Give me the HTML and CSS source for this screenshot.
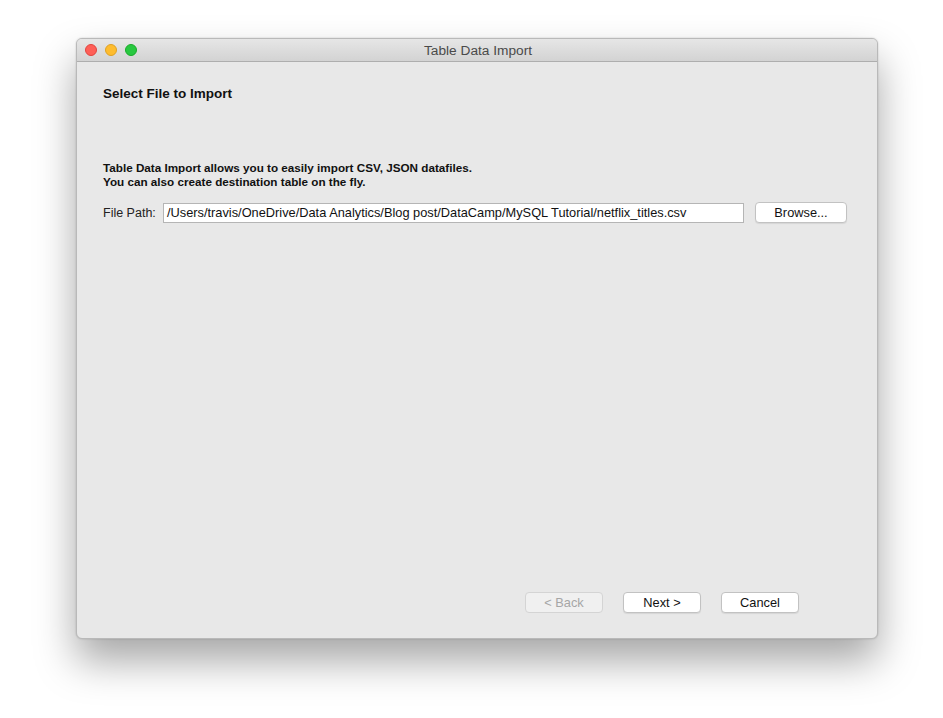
FILE: index.html
```html
<!DOCTYPE html>
<html>
<head>
<meta charset="utf-8">
<link rel="stylesheet" href="styles.css">
</head>
<body>
<div class="window">
  <div class="titlebar">
    <div class="lights">
      <span class="light red"></span>
      <span class="light yellow"></span>
      <span class="light green"></span>
    </div>
    <div class="title">Table Data Import</div>
  </div>
  <div class="content">
    <h1 class="heading">Select File to Import</h1>
    <p class="desc">Table Data Import allows you to easily import CSV, JSON datafiles.<br>You can also create destination table on the fly.</p>
    <div class="pathrow">
      <label class="label">File Path:</label>
      <div class="input">/Users/travis/OneDrive/Data Analytics/Blog post/DataCamp/MySQL Tutorial/netflix_titles.csv</div>
      <button class="btn browse">Browse...</button>
    </div>
    <div class="spacer"></div>
    <div class="footer">
      <button class="btn nav disabled">&lt; Back</button>
      <button class="btn nav">Next &gt;</button>
      <button class="btn nav">Cancel</button>
    </div>
  </div>
</div>
</body>
</html>
```
FILE: styles.css
```css
html, body {
  margin: 0;
  padding: 0;
  background: #ffffff;
  width: 943px;
  height: 718px;
  overflow: hidden;
  font-family: "Liberation Sans", Arial, sans-serif;
}
.window {
  margin: 38px 0 0 76px;
  width: 802px;
  height: 601px;
  box-sizing: border-box;
  border: 1px solid #b9b9b9;
  border-radius: 6px;
  background: #e8e8e8;
  box-shadow: 0 22px 40px rgba(0,0,0,0.35), 0 0 2px rgba(0,0,0,0.2);
  display: flex;
  flex-direction: column;
  overflow: hidden;
}
.titlebar {
  height: 22px;
  flex: none;
  background: linear-gradient(#e6e6e6, #d3d3d3);
  border-bottom: 1px solid #aeaeae;
  position: relative;
  display: flex;
  align-items: center;
  justify-content: center;
}
.lights {
  position: absolute;
  left: 8px;
  top: 5px;
  display: flex;
  gap: 8px;
}
.light {
  width: 12px;
  height: 12px;
  border-radius: 50%;
  box-sizing: border-box;
}
.red { background: #fe5f57; border: 1px solid #e0443e; }
.yellow { background: #febc2e; border: 1px solid #dea123; }
.green { background: #28c840; border: 1px solid #1aab29; }
.title {
  font-size: 13.7px;
  color: #4a4a4a;
  padding-left: 2px;
}
.content {
  flex: 1;
  display: flex;
  flex-direction: column;
  padding: 0 30px 25px 26px;
}
.heading {
  margin: 24px 0 0 0;
  font-size: 13.5px;
  font-weight: bold;
  color: #111;
  line-height: 16px;
}
.desc {
  margin: 59px 0 0 0;
  font-size: 11.7px;
  font-weight: bold;
  line-height: 14px;
  color: #111;
}
.pathrow {
  margin-top: 13px;
  display: flex;
  align-items: center;
}
.label {
  font-size: 12.5px;
  color: #222;
  width: 60px;
  flex: none;
}
.input {
  width: 581px;
  height: 20px;
  box-sizing: border-box;
  background: #fff;
  border: 1px solid #b5b5b5;
  font-size: 12.8px;
  line-height: 18px;
  padding-left: 3px;
  color: #111;
  white-space: nowrap;
  overflow: hidden;
}
.btn {
  font-family: inherit;
  font-size: 12.8px;
  color: #111;
  background: #fff;
  border: 1px solid #c2c2c2;
  border-radius: 4px;
  box-shadow: 0 1px 1px rgba(0,0,0,0.08);
  padding: 0;
  height: 21px;
  box-sizing: border-box;
}
.browse {
  margin-left: 11px;
  width: 92px;
}
.spacer { flex: 1; }
.footer {
  display: flex;
  justify-content: flex-end;
  gap: 20px;
  padding-right: 48px;
}
.nav { width: 78px; }
.disabled {
  background: #f0f0f0;
  color: #a6a6a6;
  border-color: #d4d4d4;
  box-shadow: none;
}
```
